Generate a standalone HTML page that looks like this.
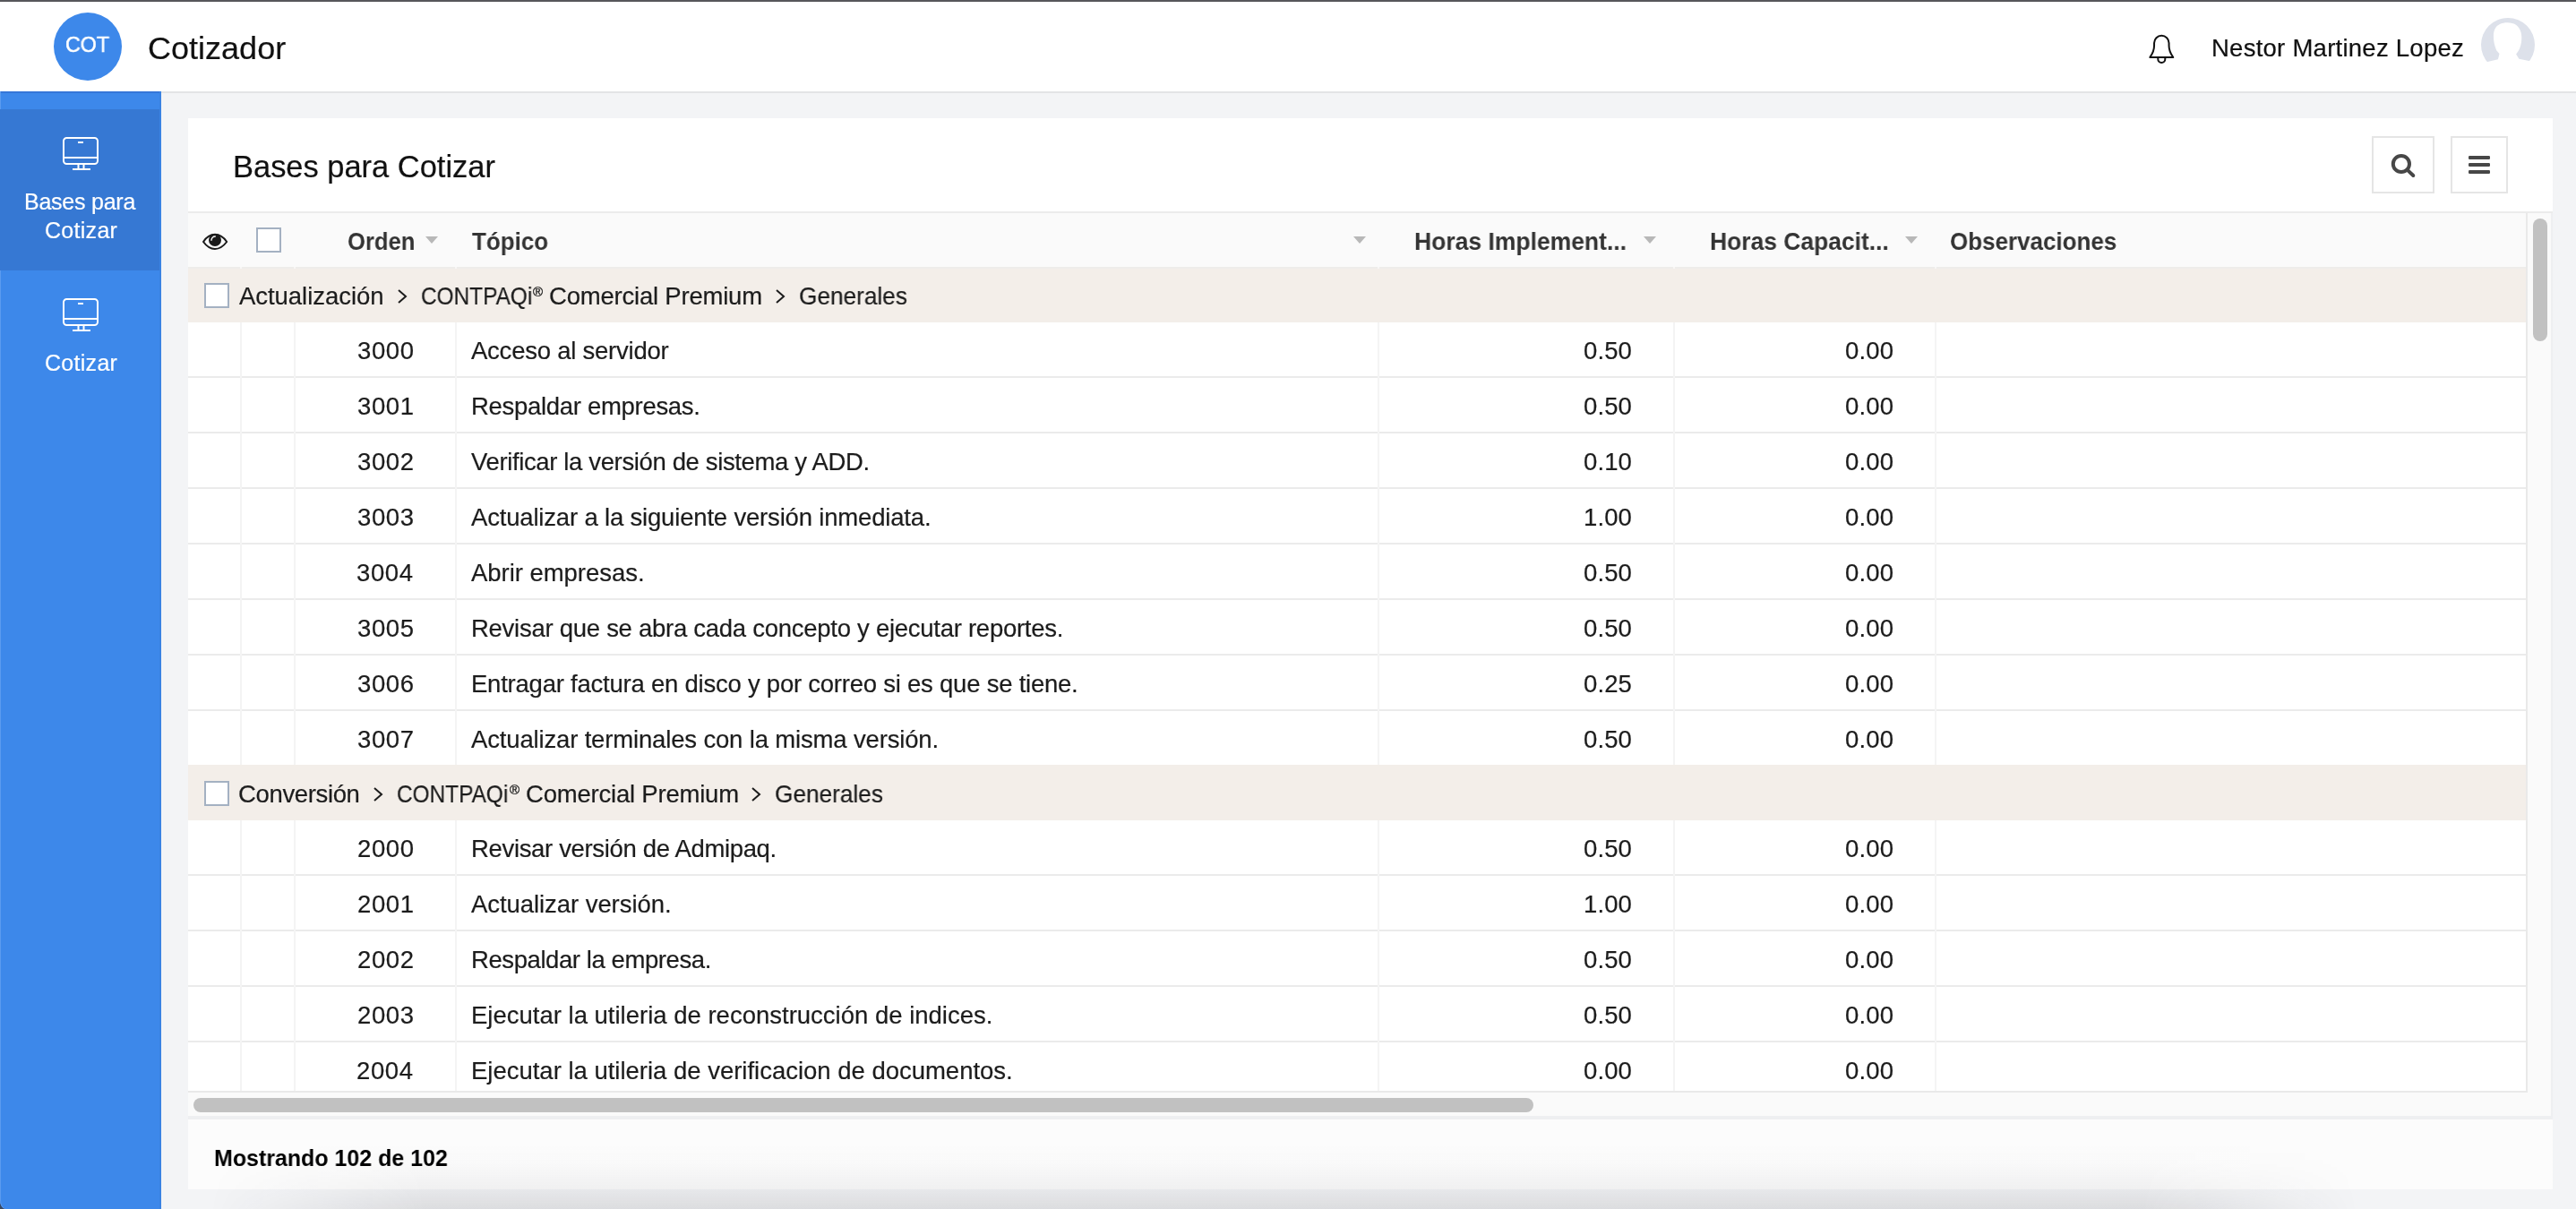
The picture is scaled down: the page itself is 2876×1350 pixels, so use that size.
<!DOCTYPE html>
<html lang="es"><head><meta charset="utf-8"><title>Cotizador</title>
<style>
html,body{margin:0;padding:0}
body{width:2876px;height:1350px;overflow:hidden;background:#f3f4f6;position:relative;font-family:"Liberation Sans",sans-serif}
.a{position:absolute}
.t{position:absolute;white-space:nowrap;line-height:40px;font-family:"Liberation Sans",sans-serif}
.t{will-change:transform}
#topbar{left:0;top:0;width:2876px;height:2px;background:#57575b}
#header{left:0;top:2px;width:2876px;height:100px;background:#fff}
#hline{left:0;top:102px;width:2876px;height:2px;background:#e3e4e6}
#logo{left:60px;top:14px;width:76px;height:76px;border-radius:50%;background:#3d88ea}
#side{left:0;top:102px;width:180px;height:1248px;background:#3d88ea;border-bottom-left-radius:6px 10px;box-shadow:inset 1px 0 0 #5b9bf0,inset -2px 0 0 #3a82e2,inset 0 2px 0 #3576d8}
#corner{left:0;top:1340px;width:6px;height:10px;background:#3a4a63}
#active{left:0;top:122px;width:178px;height:180px;background:#3678d3}
.mon{position:absolute;left:68px}
#panel{left:210px;top:132px;width:2640px;height:1196px;background:#fff}
.btn{box-sizing:border-box;border:2px solid #e5e5e5;background:#fff;top:152px;height:64px}
#gtop{left:210px;top:236px;width:2640px;height:2px;background:#ebebeb}
#ghead{left:210px;top:238px;width:2612px;height:60px;background:#fafafa}
#gbody{left:210px;top:298px;width:2610px;height:920px;background:#fff;overflow:hidden}
.row{position:absolute;left:0;width:2610px;height:60px;border-bottom:2px solid #ebebeb}
.vl{position:absolute;top:360px;width:2px;height:858px;background:#f4f4f4}
.grp{left:210px;width:2610px;height:62px;background:#f3eee9}
.cb{box-sizing:border-box;width:28px;height:28px;border:2px solid #a4b1c2;background:#fff}
#vsep{left:2820px;top:238px;width:2px;height:982px;background:#e9e9e9}
#vtrack{left:2822px;top:238px;width:26px;height:1008px;background:#fafafa}
#vedge{left:2848px;top:238px;width:2px;height:1012px;background:#eeeff1}
#vthumb{left:2828px;top:244px;width:16px;height:137px;border-radius:8px;background:#c1c1c1}
#hsep{left:210px;top:1218px;width:2612px;height:2px;background:#e9e9e9}
#htrack{left:210px;top:1220px;width:2612px;height:26px;background:#fafafa}
#hthumb{left:216px;top:1226px;width:1496px;height:16px;border-radius:8px;background:#c1c1c1}
#gbot{left:210px;top:1246px;width:2640px;height:4px;background:#eeeff1}
#footer{left:210px;top:1250px;width:2640px;height:78px;background:#fcfcfc}
#shadow{left:180px;top:1276px;width:2696px;height:74px;background:linear-gradient(rgba(25,25,35,0) 0%,rgba(25,25,35,.012) 30%,rgba(25,25,35,.05) 70%,rgba(25,25,35,.105) 100%);-webkit-mask-image:linear-gradient(90deg,transparent 2%,#000 11%,#000 82%,transparent 91%);mask-image:linear-gradient(90deg,transparent 2%,#000 11%,#000 82%,transparent 91%)}
.arrow{width:0;height:0;border-left:7px solid transparent;border-right:7px solid transparent;border-top:8px solid #b8b8b8;top:264px}
.chev{position:absolute}
</style></head><body>
<div class="a" id="header"></div>
<div class="a" id="topbar"></div>
<div class="a" id="hline"></div>
<div class="a" id="logo"></div>
<div class="a" id="corner"></div>
<div class="a" id="side"></div>
<div class="a" id="active"></div>
<svg class="mon" style="top:151px" width="44" height="42" viewBox="0 0 44 42" fill="none" stroke="#fff" stroke-width="2">
<rect x="3" y="3" width="38" height="29" rx="3.5"/>
<path d="M3 25h38M19.5 32v5M25.5 32v5M13 38h20M19 8h6"/>
</svg>
<svg class="mon" style="top:331px" width="44" height="42" viewBox="0 0 44 42" fill="none" stroke="#fff" stroke-width="2">
<rect x="3" y="3" width="38" height="29" rx="3.5"/>
<path d="M3 25h38M19.5 32v5M25.5 32v5M13 38h20M19 8h6"/>
</svg>

<!-- bell -->
<svg class="a" style="left:2396px;top:36px" width="36" height="38" viewBox="0 0 36 38" fill="none" stroke="#111" stroke-width="2" stroke-linejoin="round" stroke-linecap="round">
<path d="M4.3 28C8 23 9.05 20 9.05 15V12A8.25 8.25 0 0 1 25.55 12V15C25.55 20 26.6 23 30.3 28Z"/>
<path d="M13.3 28V30A4 4 0 0 0 21.3 30V28"/>
</svg>
<!-- avatar -->
<svg class="a" style="left:2768px;top:18px" width="64" height="66" viewBox="-2 -2 64 66">
<circle cx="30" cy="30" r="30" fill="#dde1ea"/>
<path d="M-2 52L7.3 49.1L18.9 46.2L20.5 40L17.2 36.3C15 31 13.9 26 13.9 20.6C13.9 14 16 9.5 20.5 7.3C24 5.5 27 5.3 29.6 5.3C33 5.3 37 6 39.6 8.2C43.5 11.5 45.3 16 45.3 22.2C45.3 28 44 33 41.6 37.1L39.1 40.4L42.4 45.8L53.6 47.9L62 50V64H-2Z" fill="#fff"/>
</svg>

<div class="a" id="panel"></div>
<div class="a btn" style="left:2648px;width:70px"></div>
<div class="a btn" style="left:2736px;width:64px"></div>
<svg class="a" style="left:2666px;top:168px" width="34" height="34" viewBox="0 0 34 34" fill="none" stroke="#474747" stroke-width="4" stroke-linecap="round">
<circle cx="14.9" cy="15" r="9.1"/><path d="M21.6 21.6L28.3 28"/>
</svg>
<svg class="a" style="left:2756px;top:174px" width="24" height="20" viewBox="0 0 24 20" fill="#474747">
<rect x="0" y="0" width="24" height="4" rx="1.2"/><rect x="0" y="8" width="24" height="4" rx="1.2"/><rect x="0" y="16" width="24" height="4" rx="1.2"/>
</svg>

<div class="a" id="gtop"></div>
<div class="a" id="ghead"></div>
<div class="a" id="gbody"><div class="row" style="top:62px"></div><div class="row" style="top:124px"></div><div class="row" style="top:186px"></div><div class="row" style="top:248px"></div><div class="row" style="top:310px"></div><div class="row" style="top:372px"></div><div class="row" style="top:434px"></div><div class="row" style="top:496px"></div><div class="row" style="top:618px"></div><div class="row" style="top:680px"></div><div class="row" style="top:742px"></div><div class="row" style="top:804px"></div><div class="row" style="top:866px"></div></div>
<div class="vl" style="left:268px"></div><div class="vl" style="left:328px"></div><div class="vl" style="left:508px"></div><div class="vl" style="left:1538px"></div><div class="vl" style="left:1868px"></div><div class="vl" style="left:2160px"></div>
<div class="a grp" style="top:298px"></div>
<div class="a grp" style="top:854px"></div>
<div class="a" style="left:210px;top:298px;width:2610px;height:2px;background:#eeecea"></div><div class="a" style="left:268px;top:298px;width:2px;height:2px;background:#f8f7f6"></div><div class="a" style="left:328px;top:298px;width:2px;height:2px;background:#f8f7f6"></div><div class="a" style="left:508px;top:298px;width:2px;height:2px;background:#f8f7f6"></div><div class="a" style="left:1538px;top:298px;width:2px;height:2px;background:#f8f7f6"></div><div class="a" style="left:1868px;top:298px;width:2px;height:2px;background:#f8f7f6"></div><div class="a" style="left:2160px;top:298px;width:2px;height:2px;background:#f8f7f6"></div>
<div class="a cb" style="left:286px;top:254px"></div>
<div class="a cb" style="left:228px;top:316px"></div>
<div class="a cb" style="left:228px;top:872px"></div>
<!-- eye -->
<svg class="a" style="left:224px;top:258px" width="32" height="24" viewBox="0 0 32 24">
<path d="M3 12C7 6 11.5 3.8 16 3.8C20.5 3.8 25 6 29.2 12C25 17.5 20.5 20 16 20C11.5 20 7 17.5 3 12Z" fill="none" stroke="#1a1a1a" stroke-width="2" stroke-linejoin="round"/>
<circle cx="16" cy="10" r="7" fill="#1a1a1a"/>
<path d="M12 10.3A4.2 4.2 0 0 1 16.3 6" fill="none" stroke="#fafafa" stroke-width="1.4" stroke-linecap="round"/>
</svg>
<div class="a arrow" style="left:475px"></div>
<div class="a arrow" style="left:1511px"></div>
<div class="a arrow" style="left:1835px"></div>
<div class="a arrow" style="left:2127px"></div>

<div class="a" id="vsep"></div>
<div class="a" id="vtrack"></div>
<div class="a" id="vedge"></div>
<div class="a" id="vthumb"></div>
<div class="a" id="hsep"></div>
<div class="a" id="htrack"></div>
<div class="a" id="hthumb"></div>
<div class="a" id="gbot"></div>
<div class="a" id="footer"></div>
<div class="a" id="shadow"></div>
<svg class="chev" style="left:442px;top:320.5px" width="14" height="20" viewBox="0 0 14 20" fill="none" stroke="#1c1c1c" stroke-width="2"><path d="M3 3L11 10L3 17"/></svg><svg class="chev" style="left:863.8px;top:320.5px" width="14" height="20" viewBox="0 0 14 20" fill="none" stroke="#1c1c1c" stroke-width="2"><path d="M3 3L11 10L3 17"/></svg><svg class="chev" style="left:415px;top:876.5px" width="14" height="20" viewBox="0 0 14 20" fill="none" stroke="#1c1c1c" stroke-width="2"><path d="M3 3L11 10L3 17"/></svg><svg class="chev" style="left:836.8px;top:876.5px" width="14" height="20" viewBox="0 0 14 20" fill="none" stroke="#1c1c1c" stroke-width="2"><path d="M3 3L11 10L3 17"/></svg>
<span class="t" style="left:73.40px;top:30.38px;color:#fff;font-size:24px;transform:scaleX(0.9683);transform-origin:0 50%;-webkit-text-stroke:0.5px;">COT</span>
<span class="t" style="left:165.00px;top:33.85px;color:#111;font-size:34.5px;transform:scaleX(1.0441);transform-origin:0 50%;-webkit-text-stroke:0.2px;">Cotizador</span>
<span class="t" style="left:2469.00px;top:34.27px;color:#111;font-size:27.5px;letter-spacing:0.255px;-webkit-text-stroke:0.2px;">Nestor Martinez Lopez</span>
<span class="t" style="left:26.90px;top:205.34px;color:#fff;font-size:25px;letter-spacing:-0.240px;-webkit-text-stroke:0.2px;">Bases para</span>
<span class="t" style="left:49.60px;top:236.64px;color:#fff;font-size:25px;letter-spacing:0.290px;-webkit-text-stroke:0.2px;">Cotizar</span>
<span class="t" style="left:49.60px;top:384.94px;color:#fff;font-size:25px;letter-spacing:0.290px;-webkit-text-stroke:0.2px;">Cotizar</span>
<span class="t" style="left:259.80px;top:165.65px;color:#111;font-size:34.5px;letter-spacing:-0.029px;-webkit-text-stroke:0.2px;">Bases para Cotizar</span>
<span class="t" style="left:387.80px;top:250.24px;color:#333;font-size:27px;font-weight:bold;transform:scaleX(0.9479);transform-origin:0 50%;">Orden</span>
<span class="t" style="left:526.90px;top:250.24px;color:#333;font-size:27px;font-weight:bold;transform:scaleX(0.9615);transform-origin:0 50%;">Tópico</span>
<span class="t" style="left:1579.00px;top:250.24px;color:#333;font-size:27px;font-weight:bold;transform:scaleX(0.9814);transform-origin:0 50%;">Horas Implement...</span>
<span class="t" style="left:1909.20px;top:250.24px;color:#333;font-size:27px;font-weight:bold;transform:scaleX(0.9794);transform-origin:0 50%;">Horas Capacit...</span>
<span class="t" style="left:2177.00px;top:250.24px;color:#333;font-size:27px;font-weight:bold;transform:scaleX(0.9625);transform-origin:0 50%;">Observaciones</span>
<span class="t" style="left:238.60px;top:1273.49px;color:#000;font-size:26px;font-weight:bold;transform:scaleX(0.9601);transform-origin:0 50%;">Mostrando 102 de 102</span>
<span class="t" style="left:267.00px;top:311.37px;color:#1c1c1c;font-size:27.5px;letter-spacing:-0.045px;-webkit-text-stroke:0.2px;">Actualización</span>
<span class="t" style="left:469.70px;top:311.37px;color:#1c1c1c;font-size:27.5px;transform:scaleX(0.8873);transform-origin:0 50%;-webkit-text-stroke:0.2px;">CONTPAQi</span>
<span class="t" style="left:595.20px;top:305.90px;color:#1c1c1c;font-size:15px;-webkit-text-stroke:0.35px;">®</span>
<span class="t" style="left:613.20px;top:311.37px;color:#1c1c1c;font-size:27.5px;letter-spacing:-0.208px;-webkit-text-stroke:0.2px;">Comercial Premium</span>
<span class="t" style="left:892.00px;top:311.37px;color:#1c1c1c;font-size:27.5px;transform:scaleX(0.9526);transform-origin:0 50%;-webkit-text-stroke:0.2px;">Generales</span>
<span class="t" style="left:266.00px;top:867.37px;color:#1c1c1c;font-size:27.5px;letter-spacing:-0.356px;-webkit-text-stroke:0.2px;">Conversión</span>
<span class="t" style="left:443.00px;top:867.37px;color:#1c1c1c;font-size:27.5px;transform:scaleX(0.8873);transform-origin:0 50%;-webkit-text-stroke:0.2px;">CONTPAQi</span>
<span class="t" style="left:568.50px;top:861.90px;color:#1c1c1c;font-size:15px;-webkit-text-stroke:0.35px;">®</span>
<span class="t" style="left:586.50px;top:867.37px;color:#1c1c1c;font-size:27.5px;letter-spacing:-0.208px;-webkit-text-stroke:0.2px;">Comercial Premium</span>
<span class="t" style="left:865.30px;top:867.37px;color:#1c1c1c;font-size:27.5px;transform:scaleX(0.9526);transform-origin:0 50%;-webkit-text-stroke:0.2px;">Generales</span>
<span class="t" style="left:399.20px;top:372.37px;color:#1c1c1c;font-size:27.5px;letter-spacing:0.600px;-webkit-text-stroke:0.2px;">3000</span>
<span class="t" style="left:526.40px;top:372.37px;color:#1c1c1c;font-size:27.5px;letter-spacing:-0.236px;-webkit-text-stroke:0.2px;">Acceso al servidor</span>
<span class="t" style="left:1768.00px;top:372.37px;color:#1c1c1c;font-size:27.5px;letter-spacing:0.100px;-webkit-text-stroke:0.2px;">0.50</span>
<span class="t" style="left:2060.00px;top:372.37px;color:#1c1c1c;font-size:27.5px;letter-spacing:0.150px;-webkit-text-stroke:0.2px;">0.00</span>
<span class="t" style="left:399.20px;top:434.37px;color:#1c1c1c;font-size:27.5px;letter-spacing:0.600px;-webkit-text-stroke:0.2px;">3001</span>
<span class="t" style="left:526.40px;top:434.37px;color:#1c1c1c;font-size:27.5px;letter-spacing:-0.302px;-webkit-text-stroke:0.2px;">Respaldar empresas.</span>
<span class="t" style="left:1768.00px;top:434.37px;color:#1c1c1c;font-size:27.5px;letter-spacing:0.100px;-webkit-text-stroke:0.2px;">0.50</span>
<span class="t" style="left:2060.00px;top:434.37px;color:#1c1c1c;font-size:27.5px;letter-spacing:0.150px;-webkit-text-stroke:0.2px;">0.00</span>
<span class="t" style="left:399.20px;top:496.37px;color:#1c1c1c;font-size:27.5px;letter-spacing:0.600px;-webkit-text-stroke:0.2px;">3002</span>
<span class="t" style="left:526.40px;top:496.37px;color:#1c1c1c;font-size:27.5px;letter-spacing:-0.364px;-webkit-text-stroke:0.2px;">Verificar la versión de sistema y ADD.</span>
<span class="t" style="left:1768.00px;top:496.37px;color:#1c1c1c;font-size:27.5px;letter-spacing:0.100px;-webkit-text-stroke:0.2px;">0.10</span>
<span class="t" style="left:2060.00px;top:496.37px;color:#1c1c1c;font-size:27.5px;letter-spacing:0.150px;-webkit-text-stroke:0.2px;">0.00</span>
<span class="t" style="left:399.20px;top:558.37px;color:#1c1c1c;font-size:27.5px;letter-spacing:0.600px;-webkit-text-stroke:0.2px;">3003</span>
<span class="t" style="left:526.40px;top:558.37px;color:#1c1c1c;font-size:27.5px;letter-spacing:-0.179px;-webkit-text-stroke:0.2px;">Actualizar a la siguiente versión inmediata.</span>
<span class="t" style="left:1768.00px;top:558.37px;color:#1c1c1c;font-size:27.5px;letter-spacing:0.100px;-webkit-text-stroke:0.2px;">1.00</span>
<span class="t" style="left:2060.00px;top:558.37px;color:#1c1c1c;font-size:27.5px;letter-spacing:0.150px;-webkit-text-stroke:0.2px;">0.00</span>
<span class="t" style="left:398.20px;top:620.37px;color:#1c1c1c;font-size:27.5px;letter-spacing:0.600px;-webkit-text-stroke:0.2px;">3004</span>
<span class="t" style="left:526.40px;top:620.37px;color:#1c1c1c;font-size:27.5px;letter-spacing:-0.039px;-webkit-text-stroke:0.2px;">Abrir empresas.</span>
<span class="t" style="left:1768.00px;top:620.37px;color:#1c1c1c;font-size:27.5px;letter-spacing:0.100px;-webkit-text-stroke:0.2px;">0.50</span>
<span class="t" style="left:2060.00px;top:620.37px;color:#1c1c1c;font-size:27.5px;letter-spacing:0.150px;-webkit-text-stroke:0.2px;">0.00</span>
<span class="t" style="left:399.20px;top:682.37px;color:#1c1c1c;font-size:27.5px;letter-spacing:0.600px;-webkit-text-stroke:0.2px;">3005</span>
<span class="t" style="left:526.40px;top:682.37px;color:#1c1c1c;font-size:27.5px;letter-spacing:-0.270px;-webkit-text-stroke:0.2px;">Revisar que se abra cada concepto y ejecutar reportes.</span>
<span class="t" style="left:1768.00px;top:682.37px;color:#1c1c1c;font-size:27.5px;letter-spacing:0.100px;-webkit-text-stroke:0.2px;">0.50</span>
<span class="t" style="left:2060.00px;top:682.37px;color:#1c1c1c;font-size:27.5px;letter-spacing:0.150px;-webkit-text-stroke:0.2px;">0.00</span>
<span class="t" style="left:399.20px;top:744.37px;color:#1c1c1c;font-size:27.5px;letter-spacing:0.600px;-webkit-text-stroke:0.2px;">3006</span>
<span class="t" style="left:526.40px;top:744.37px;color:#1c1c1c;font-size:27.5px;letter-spacing:-0.231px;-webkit-text-stroke:0.2px;">Entragar factura en disco y por correo si es que se tiene.</span>
<span class="t" style="left:1768.00px;top:744.37px;color:#1c1c1c;font-size:27.5px;letter-spacing:0.100px;-webkit-text-stroke:0.2px;">0.25</span>
<span class="t" style="left:2060.00px;top:744.37px;color:#1c1c1c;font-size:27.5px;letter-spacing:0.150px;-webkit-text-stroke:0.2px;">0.00</span>
<span class="t" style="left:399.20px;top:806.37px;color:#1c1c1c;font-size:27.5px;letter-spacing:0.600px;-webkit-text-stroke:0.2px;">3007</span>
<span class="t" style="left:526.40px;top:806.37px;color:#1c1c1c;font-size:27.5px;letter-spacing:-0.159px;-webkit-text-stroke:0.2px;">Actualizar terminales con la misma versión.</span>
<span class="t" style="left:1768.00px;top:806.37px;color:#1c1c1c;font-size:27.5px;letter-spacing:0.100px;-webkit-text-stroke:0.2px;">0.50</span>
<span class="t" style="left:2060.00px;top:806.37px;color:#1c1c1c;font-size:27.5px;letter-spacing:0.150px;-webkit-text-stroke:0.2px;">0.00</span>
<span class="t" style="left:399.20px;top:928.37px;color:#1c1c1c;font-size:27.5px;letter-spacing:0.600px;-webkit-text-stroke:0.2px;">2000</span>
<span class="t" style="left:526.40px;top:928.37px;color:#1c1c1c;font-size:27.5px;letter-spacing:-0.339px;-webkit-text-stroke:0.2px;">Revisar versión de Admipaq.</span>
<span class="t" style="left:1768.00px;top:928.37px;color:#1c1c1c;font-size:27.5px;letter-spacing:0.100px;-webkit-text-stroke:0.2px;">0.50</span>
<span class="t" style="left:2060.00px;top:928.37px;color:#1c1c1c;font-size:27.5px;letter-spacing:0.150px;-webkit-text-stroke:0.2px;">0.00</span>
<span class="t" style="left:399.20px;top:990.37px;color:#1c1c1c;font-size:27.5px;letter-spacing:0.600px;-webkit-text-stroke:0.2px;">2001</span>
<span class="t" style="left:526.40px;top:990.37px;color:#1c1c1c;font-size:27.5px;letter-spacing:-0.063px;-webkit-text-stroke:0.2px;">Actualizar versión.</span>
<span class="t" style="left:1768.00px;top:990.37px;color:#1c1c1c;font-size:27.5px;letter-spacing:0.100px;-webkit-text-stroke:0.2px;">1.00</span>
<span class="t" style="left:2060.00px;top:990.37px;color:#1c1c1c;font-size:27.5px;letter-spacing:0.150px;-webkit-text-stroke:0.2px;">0.00</span>
<span class="t" style="left:399.20px;top:1052.37px;color:#1c1c1c;font-size:27.5px;letter-spacing:0.600px;-webkit-text-stroke:0.2px;">2002</span>
<span class="t" style="left:526.40px;top:1052.37px;color:#1c1c1c;font-size:27.5px;letter-spacing:-0.416px;-webkit-text-stroke:0.2px;">Respaldar la empresa.</span>
<span class="t" style="left:1768.00px;top:1052.37px;color:#1c1c1c;font-size:27.5px;letter-spacing:0.100px;-webkit-text-stroke:0.2px;">0.50</span>
<span class="t" style="left:2060.00px;top:1052.37px;color:#1c1c1c;font-size:27.5px;letter-spacing:0.150px;-webkit-text-stroke:0.2px;">0.00</span>
<span class="t" style="left:399.20px;top:1114.37px;color:#1c1c1c;font-size:27.5px;letter-spacing:0.600px;-webkit-text-stroke:0.2px;">2003</span>
<span class="t" style="left:526.40px;top:1114.37px;color:#1c1c1c;font-size:27.5px;-webkit-text-stroke:0.2px;">Ejecutar la utileria de reconstrucción de indices.</span>
<span class="t" style="left:1768.00px;top:1114.37px;color:#1c1c1c;font-size:27.5px;letter-spacing:0.100px;-webkit-text-stroke:0.2px;">0.50</span>
<span class="t" style="left:2060.00px;top:1114.37px;color:#1c1c1c;font-size:27.5px;letter-spacing:0.150px;-webkit-text-stroke:0.2px;">0.00</span>
<span class="t" style="left:398.20px;top:1176.37px;color:#1c1c1c;font-size:27.5px;letter-spacing:0.600px;-webkit-text-stroke:0.2px;">2004</span>
<span class="t" style="left:526.40px;top:1176.37px;color:#1c1c1c;font-size:27.5px;letter-spacing:-0.012px;-webkit-text-stroke:0.2px;">Ejecutar la utileria de verificacion de documentos.</span>
<span class="t" style="left:1768.00px;top:1176.37px;color:#1c1c1c;font-size:27.5px;letter-spacing:0.100px;-webkit-text-stroke:0.2px;">0.00</span>
<span class="t" style="left:2060.00px;top:1176.37px;color:#1c1c1c;font-size:27.5px;letter-spacing:0.150px;-webkit-text-stroke:0.2px;">0.00</span>
</body></html>
